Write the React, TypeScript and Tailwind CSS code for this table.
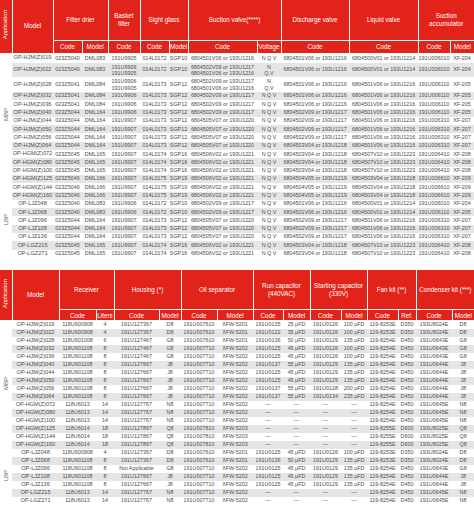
const RED = "bg-[#e2231a]";

type Row = string[];

const g1 = ["023Z5041", "DML084", "191U9906", "014L0173", "SGP12", "6804502V09 or 193U1217", "N Q V", "6804501V06 or 193U1216", "6804501V06 or 193U1216", "191U006110", "XF-205"];
const g2 = ["023Z5044", "DML164", "191U9907", "014L0173", "SGP12", "6804505V07 or 193U1220", "N Q V", "6804502V09 or 193U1217", "6804501V06 or 193U1216", "191U006310", "XF-207"];
const g3 = ["023Z5045", "DML165", "191U9907", "014L0174", "SGP16", "6804506V02 or 193U1221", "N Q V", "6804503V04 or 193U1218", "6804507V10 or 193U1223", "191U006410", "XF-208"];
const g4 = ["023Z5046", "DML166", "191U9907", "014L0175", "SGP19", "6804506V02 or 193U1221", "N Q V", "6804504V05 or 193U1219", "6804503V04 or 193U1218", "191U006610", "XF-209"];

const topRows: Row[] = [
  ["OP-HJM(Z)019", "023Z5040", "DML083", "191U9905", "014L0172", "SGP10", "6804501V06 or 193U1216", "N Q V", "6804501V06 or 193U1216", "6804500V01 or 193U1214", "191U006010", "XF-204"],
  ["OP-HJM(Z)022", "023Z5040", "DML083", "191U9906|191U9905", "014L0172", "SGP10", "6804502V09 or 193U1217|6804501V06 or 193U1216", "N|Q,V", "6804501V06 or 193U1216", "6804500V01 or 193U1214", "191U006010", "XF-204"],
  ["OP-HJM(Z)028", "023Z5041", "DML084", "191U9906|191U9905", "014L0173", "SGP12", "6804502V09 or 193U1217|6804501V06 or 193U1216", "N|Q,V", "6804501V06 or 193U1216", "6804501V06 or 193U1216", "191U006110", "XF-205"],
  ["OP-HJM(Z)032", ...g1],
  ["OP-HJM(Z)036", ...g1],
  ["OP-HJM(Z)040", "023Z5044", "DML164", "191U9906", "014L0173", "SGP12", "6804502V09 or 193U1217", "N Q V", "6804502V09 or 193U1217", "6804501V06 or 193U1216", "191U006110", "XF-205"],
  ["OP-HJM(Z)044", ...g2],
  ["OP-HJM(Z)050", ...g2],
  ["OP-HJM(Z)056", ...g2],
  ["OP-HJM(Z)064", "023Z5044", "DML164", "191U9907", "014L0173", "SGP12", "6804505V07 or 193U1220", "N Q V", "6804503V04 or 193U1218", "6804501V06 or 193U1216", "191U006310", "XF-207"],
  ["OP-HGM(Z)072", ...g3],
  ["OP-HGM(Z)080", ...g3],
  ["OP-HGM(Z)100", ...g3],
  ["OP-HGM(Z)125", ...g4],
  ["OP-HGM(Z)144", ...g4],
  ["OP-HGM(Z)160", ...g4],
  ["OP-LJZ048", "023Z5040", "DML083", "191U9906", "014L0172", "SGP10", "6804502V09 or 193U1217", "N Q V", "6804501V06 or 193U1216", "6804500V01 or 193U1214", "191U006010", "XF-204"],
  ["OP-LJZ068", "023Z5040", "DML083", "191U9906", "014L0172", "SGP10", "6804502V09 or 193U1217", "N Q V", "6804501V06 or 193U1216", "6804500V01 or 193U1214", "191U006110", "XF-205"],
  ["OP-LJZ096", ...g2],
  ["OP-LJZ108", ...g2],
  ["OP-LJZ136", ...g2],
  ["OP-LGZ215", ...g3],
  ["OP-LGZ271", ...g3],
];

const D = "—";
const b8 = ["118U601108", "8", "191U127667", "J8", "191U007710", "XFW-5202"];
const bN = ["118U6013", "14", "191U127767", "N8", "191U007710", "XFW-5202", D, D, D, D, "119-8254E", "D450", "191U0645E", "N8"];
const bQ = ["118U6014", "18", "191U127867", "Q8", "191U007810", "XFW-5203", D, D, D, D, "119-8255E", "D600", "193U8025E", "Q8"];
const tJ = ["119-8254E", "D450", "191U0644E", "J8"];
const tG = ["119-8254E", "D450", "191U0643E", "G8"];

const bottomRows: Row[] = [
  ["OP-HJM(Z)019", "118U600908", "4", "191U127367", "D8", "191U007610", "XFW-5201", "191U0135", "25 µFD", "191U0126", "100 µFD", "119-8253E", "D350", "193U8024E", "D8"],
  ["OP-HJM(Z)022", "118U600908", "4", "191U127367", "D8", "191U007610", "XFW-5201", "191U0122", "35 µFD", "191U0126", "100 µFD", "119-8253E", "D350", "193U8024E", "D8"],
  ["OP-HJM(Z)028", "118U601008", "6", "191U127467", "G8", "191U007610", "XFW-5201", "191U0136", "50 µFD", "191U0129", "135 µFD", ...tG],
  ["OP-HJM(Z)032", "118U601108", "8", "191U127467", "G8", "191U007710", "XFW-5202", "191U0125", "45 µFD", "191U0126", "100 µFD", ...tG],
  ["OP-HJM(Z)036", "118U601108", "8", "191U127467", "G8", "191U007710", "XFW-5202", "191U0125", "45 µFD", "191U0126", "100 µFD", ...tG],
  ["OP-HJM(Z)040", ...b8, "191U0137", "55 µFD", "191U0129", "135 µFD", ...tJ],
  ["OP-HJM(Z)044", ...b8, "191U0125", "45 µFD", "191U0129", "135 µFD", ...tJ],
  ["OP-HJM(Z)050", ...b8, "191U0125", "45 µFD", "191U0129", "135 µFD", ...tJ],
  ["OP-HJM(Z)056", ...b8, "191U0137", "55 µFD", "191U0128", "200 µFD", ...tJ],
  ["OP-HJM(Z)064", ...b8, "191U0137", "55 µFD", "191U0134", "235 µFD", ...tJ],
  ["OP-HGM(Z)072", ...bN],
  ["OP-HGM(Z)080", ...bN],
  ["OP-HGM(Z)100", ...bN],
  ["OP-HGM(Z)125", ...bQ],
  ["OP-HGM(Z)144", ...bQ],
  ["OP-HGM(Z)160", ...bQ],
  ["OP-LJZ048", "118U600908", "4", "191U127367", "D8", "191U007610", "XFW-5201", "191U0125", "45 µFD", "191U0126", "100 µFD", "119-8253E", "D350", "193U8024E", "D8"],
  ["OP-LJZ068", "118U601108", "8", "191U127367", "D8", "191U007610", "XFW-5201", "191U0136", "50 µFD", "191U0129", "135 µFD", "119-8253E", "D350", "193U8024E", "D8"],
  ["OP-LJZ096", "118U601108", "8", "Not Applicable", "G8", "191U007710", "XFW-5202", "191U0125", "45 µFD", "191U0129", "135 µFD", ...tG],
  ["OP-LJZ108", ...b8, "191U0125", "45 µFD", "191U0129", "135 µFD", ...tJ],
  ["OP-LJZ136", ...b8, "191U0125", "45 µFD", "191U0129", "135 µFD", ...tJ],
  ["OP-LGZ215", ...bN],
  ["OP-LGZ271", ...bN],
];

const topCols = [12, 41, 29, 26, 32, 29, 19, 69, 24, 68, 69, 32, 24];
const bottomCols = [12, 47, 37, 18, 45, 22, 36, 36, 30, 27, 31, 26, 31, 18, 36, 22];

const th = `${RED} border border-white text-white font-normal text-center align-middle p-0 leading-[1.2]`;

function Vertical({ text }: { text: string }) {
  return <span className="inline-block [writing-mode:vertical-rl] rotate-180">{text}</span>;
}

function DataCell({ value, striped, model }: { value: string; striped: boolean; model: boolean }) {
  const lines = value.split("|");
  return (
    <td
      className={`p-0 text-center align-middle whitespace-nowrap overflow-hidden ${striped ? "bg-[#e5e5e6]" : "bg-white"} ${model ? "text-[5.6px]" : ""}`}
    >
      {lines.map((l, i) => (
        <div key={i} className={lines.length > 1 ? "leading-[1.2]" : "leading-none"}>
          {l}
        </div>
      ))}
    </td>
  );
}

function Body({ rows, heights, mbpPad, lbpPad }: { rows: Row[]; heights: (i: number) => string; mbpPad: string; lbpPad: string }) {
  return (
    <tbody className="text-[5.4px] text-[#4d4d4d]">
      {rows.map((r, i) => (
        <tr key={r[0]} className={heights(i)}>
          {i === 0 && (
            <td rowSpan={16} className={`p-0 text-center align-middle bg-white text-[6px] text-[#6b6b6b] ${mbpPad}`}>
              <Vertical text="MBP" />
            </td>
          )}
          {i === 16 && (
            <td rowSpan={7} className={`p-0 text-center align-middle bg-white text-[6px] text-[#6b6b6b] ${lbpPad}`}>
              <Vertical text="LBP" />
            </td>
          )}
          {r.map((v, j) => (
            <DataCell key={j} value={v} striped={i % 2 === 1} model={j === 0} />
          ))}
        </tr>
      ))}
    </tbody>
  );
}

function TopTable() {
  const heights = (i: number) => (i === 0 ? "h-[10px]" : i === 1 ? "h-[14px]" : i === 2 ? "h-[15px]" : "h-[8.3px]");
  return (
    <table className="w-[474px] table-fixed border-collapse">
      <colgroup>
        {topCols.map((w, i) => (
          <col key={i} style={{ width: w }} />
        ))}
      </colgroup>
      <thead className="text-[6.3px]">
        <tr className="h-[40px]">
          <th rowSpan={2} className={`${th} border-l-0 border-t-0 text-[6px] text-[#f6c9c7]`}>
            <Vertical text="Application" />
          </th>
          <th rowSpan={2} className={`${th} border-t-0`}>Model</th>
          <th colSpan={2} className={`${th} border-t-0`}>Filter drier</th>
          <th className={`${th} border-t-0`}>Basket<br />filter</th>
          <th colSpan={2} className={`${th} border-t-0`}>Sight glass</th>
          <th colSpan={2} className={`${th} border-t-0`}>Suction valve(****)</th>
          <th className={`${th} border-t-0`}>Discharge valve</th>
          <th className={`${th} border-t-0`}>Liquid valve</th>
          <th colSpan={2} className={`${th} border-t-0 border-r-0`}>Suction<br />accumulator</th>
        </tr>
        <tr className="h-[13px]">
          {["Code", "Model", "Code", "Code", "Model", "Code", "Voltage", "Code", "Code", "Code", "Model"].map((t, i, a) => (
            <th key={i} className={`${th} ${i === a.length - 1 ? "border-r-0" : ""}`}>{t}</th>
          ))}
        </tr>
      </thead>
      <Body rows={topRows} heights={heights} mbpPad="pb-[22px]" lbpPad="pb-[16px]" />
    </table>
  );
}

function BottomTable() {
  return (
    <table className="w-[474px] table-fixed border-collapse">
      <colgroup>
        {bottomCols.map((w, i) => (
          <col key={i} style={{ width: w }} />
        ))}
      </colgroup>
      <thead className="text-[6.3px]">
        <tr className="h-[40px]">
          <th rowSpan={2} className={`${th} border-l-0 border-t-0 text-[6px] text-[#f6c9c7]`}>
            <Vertical text="Application" />
          </th>
          <th rowSpan={2} className={`${th} border-t-0`}>Model</th>
          <th colSpan={2} className={`${th} border-t-0`}>Receiver</th>
          <th colSpan={2} className={`${th} border-t-0`}>Housing (*)</th>
          <th colSpan={2} className={`${th} border-t-0`}>Oil separator</th>
          <th colSpan={2} className={`${th} border-t-0`}>Run capacitor<br />(440VAC)</th>
          <th colSpan={2} className={`${th} border-t-0`}>Starting capacitor<br />(330V)</th>
          <th colSpan={2} className={`${th} border-t-0`}>Fan kit (**)</th>
          <th colSpan={2} className={`${th} border-t-0 border-r-0`}>Condenser kit (***)</th>
        </tr>
        <tr className="h-[11px]">
          {["Code", "Liters", "Code", "Model", "Code", "Model", "Code", "Model", "Code", "Model", "Code", "Ref.", "Code", "Model"].map((t, i, a) => (
            <th key={i} className={`${th} ${i === a.length - 1 ? "border-r-0" : ""}`}>{t}</th>
          ))}
        </tr>
      </thead>
      <Body rows={bottomRows} heights={() => "h-[8px]"} mbpPad="" lbpPad="" />
    </table>
  );
}

export default function App() {
  return (
    <div className="w-[474px] h-[509px] overflow-hidden bg-white font-['Liberation_Sans',Arial,sans-serif]">
      <TopTable />
      <div className="mt-[12px]">
        <BottomTable />
      </div>
    </div>
  );
}
